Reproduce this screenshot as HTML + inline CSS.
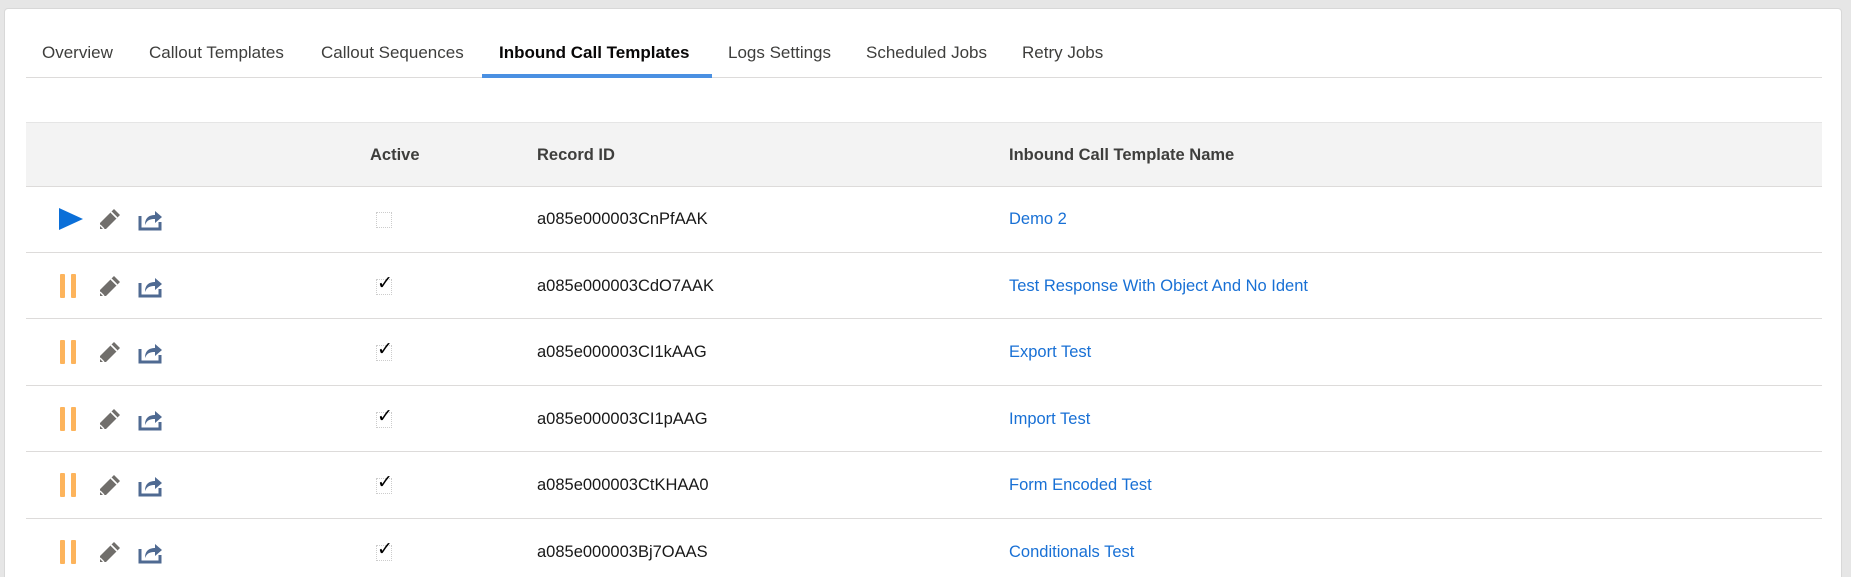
<!DOCTYPE html>
<html><head><meta charset="utf-8"><style>
html,body{margin:0;width:1851px;height:577px;overflow:hidden}
body{background:#e6e6e6;font-family:"Liberation Sans",sans-serif;position:relative}
.card{position:absolute;left:4px;top:8px;width:1838px;height:590px;background:#fff;border-radius:4px;border:1px solid #d8d8d8;box-sizing:border-box}
.tab{position:absolute;top:43px;font-size:17px;color:#3e3e3c;white-space:nowrap}
.tab.b{font-weight:bold;color:#080707}
.abs{position:absolute}
.cell{position:absolute;font-size:16.5px;color:#181818;white-space:nowrap}
.link{color:#1870d5}
.hd{font-weight:bold;color:#3e3e3c}
</style></head><body>
<div class="card"></div>
<div class="tab" style="left:42px">Overview</div>
<div class="tab" style="left:149px">Callout Templates</div>
<div class="tab" style="left:321px">Callout Sequences</div>
<div class="tab b" style="left:499px">Inbound Call Templates</div>
<div class="tab" style="left:728px">Logs Settings</div>
<div class="tab" style="left:866px">Scheduled Jobs</div>
<div class="tab" style="left:1022px">Retry Jobs</div>
<div class="abs" style="left:26px;top:77px;width:1796px;height:1px;background:#dddbda"></div>
<div class="abs" style="left:482px;top:74px;width:230px;height:4px;background:#4a90e2"></div>
<div class="abs" style="left:26px;top:122px;width:1796px;height:63px;background:#f3f3f3;border-top:1px solid #e5e5e5;border-bottom:1px solid #dddbda"></div>
<div class="cell hd" style="left:370px;top:146px">Active</div>
<div class="cell hd" style="left:537px;top:146px">Record ID</div>
<div class="cell hd" style="left:1009px;top:146px">Inbound Call Template Name</div>

<div id="rows"></div>
<script>
var data=[["a085e000003CnPfAAK","Demo 2",0],["a085e000003CdO7AAK","Test Response With Object And No Ident",1],["a085e000003CI1kAAG","Export Test",1],["a085e000003CI1pAAG","Import Test",1],["a085e000003CtKHAA0","Form Encoded Test",1],["a085e000003Bj7OAAS","Conditionals Test",1]];
var h="";
data.forEach(function(d,i){
 var top=186+i*66.6, c=top+33;
 if(i>0) h+='<div class="abs" style="left:26px;top:'+(top-1)+'px;width:1796px;height:1px;background:#dddbda"></div>';
 if(d[2]==0) h+='<svg class="abs" style="left:59px;top:'+(c-11)+'px" width="24" height="22"><polygon points="0,0 24,11 0,22" fill="#0b6fd8"/></svg>';
 else h+='<div class="abs" style="left:60px;top:'+(c-12)+'px;width:5px;height:24px;background:#fdb45c;border-radius:1px"></div><div class="abs" style="left:71px;top:'+(c-12)+'px;width:5px;height:24px;background:#fdb45c;border-radius:1px"></div>';
 h+='<svg class="abs" style="left:98px;top:'+(c-12)+'px" width="24" height="24" viewBox="0 0 24 24"><path d="M16 2 L22 8 L8 22 L2 22 L2 16 Z" fill="#706e6b"/><path d="M13 5 L19 11" stroke="#fff" stroke-width="1.6"/><path d="M2 18 L6 22" stroke="#fff" stroke-width="1.4"/></svg>';
 h+='<svg class="abs" style="left:138px;top:'+(c-12)+'px" width="25" height="24" viewBox="0 0 25 24"><path d="M2 9 V22 H22 V15" fill="none" stroke="#4f6a92" stroke-width="3"/><path d="M7 18 C7 10 12 8 17 8 V4 L24 10 L17 16 V12 C12 12 9 13 7 18 Z" fill="#4f6a92"/></svg>';
 h+='<div class="abs" style="left:376px;top:'+(c-7)+'px;width:14px;height:14px;border:1px dotted #ccc"></div>';
 if(d[2]) h+='<div class="cell" style="left:377px;top:'+(c-14)+'px;font-size:19px;color:#000">✓</div>';
 h+='<div class="cell" style="left:537px;top:'+(c-9)+'px">'+d[0]+'</div>';
 h+='<div class="cell link" style="left:1009px;top:'+(c-9)+'px">'+d[1]+'</div>';
});
document.getElementById("rows").innerHTML=h;
</script>
</body></html>
